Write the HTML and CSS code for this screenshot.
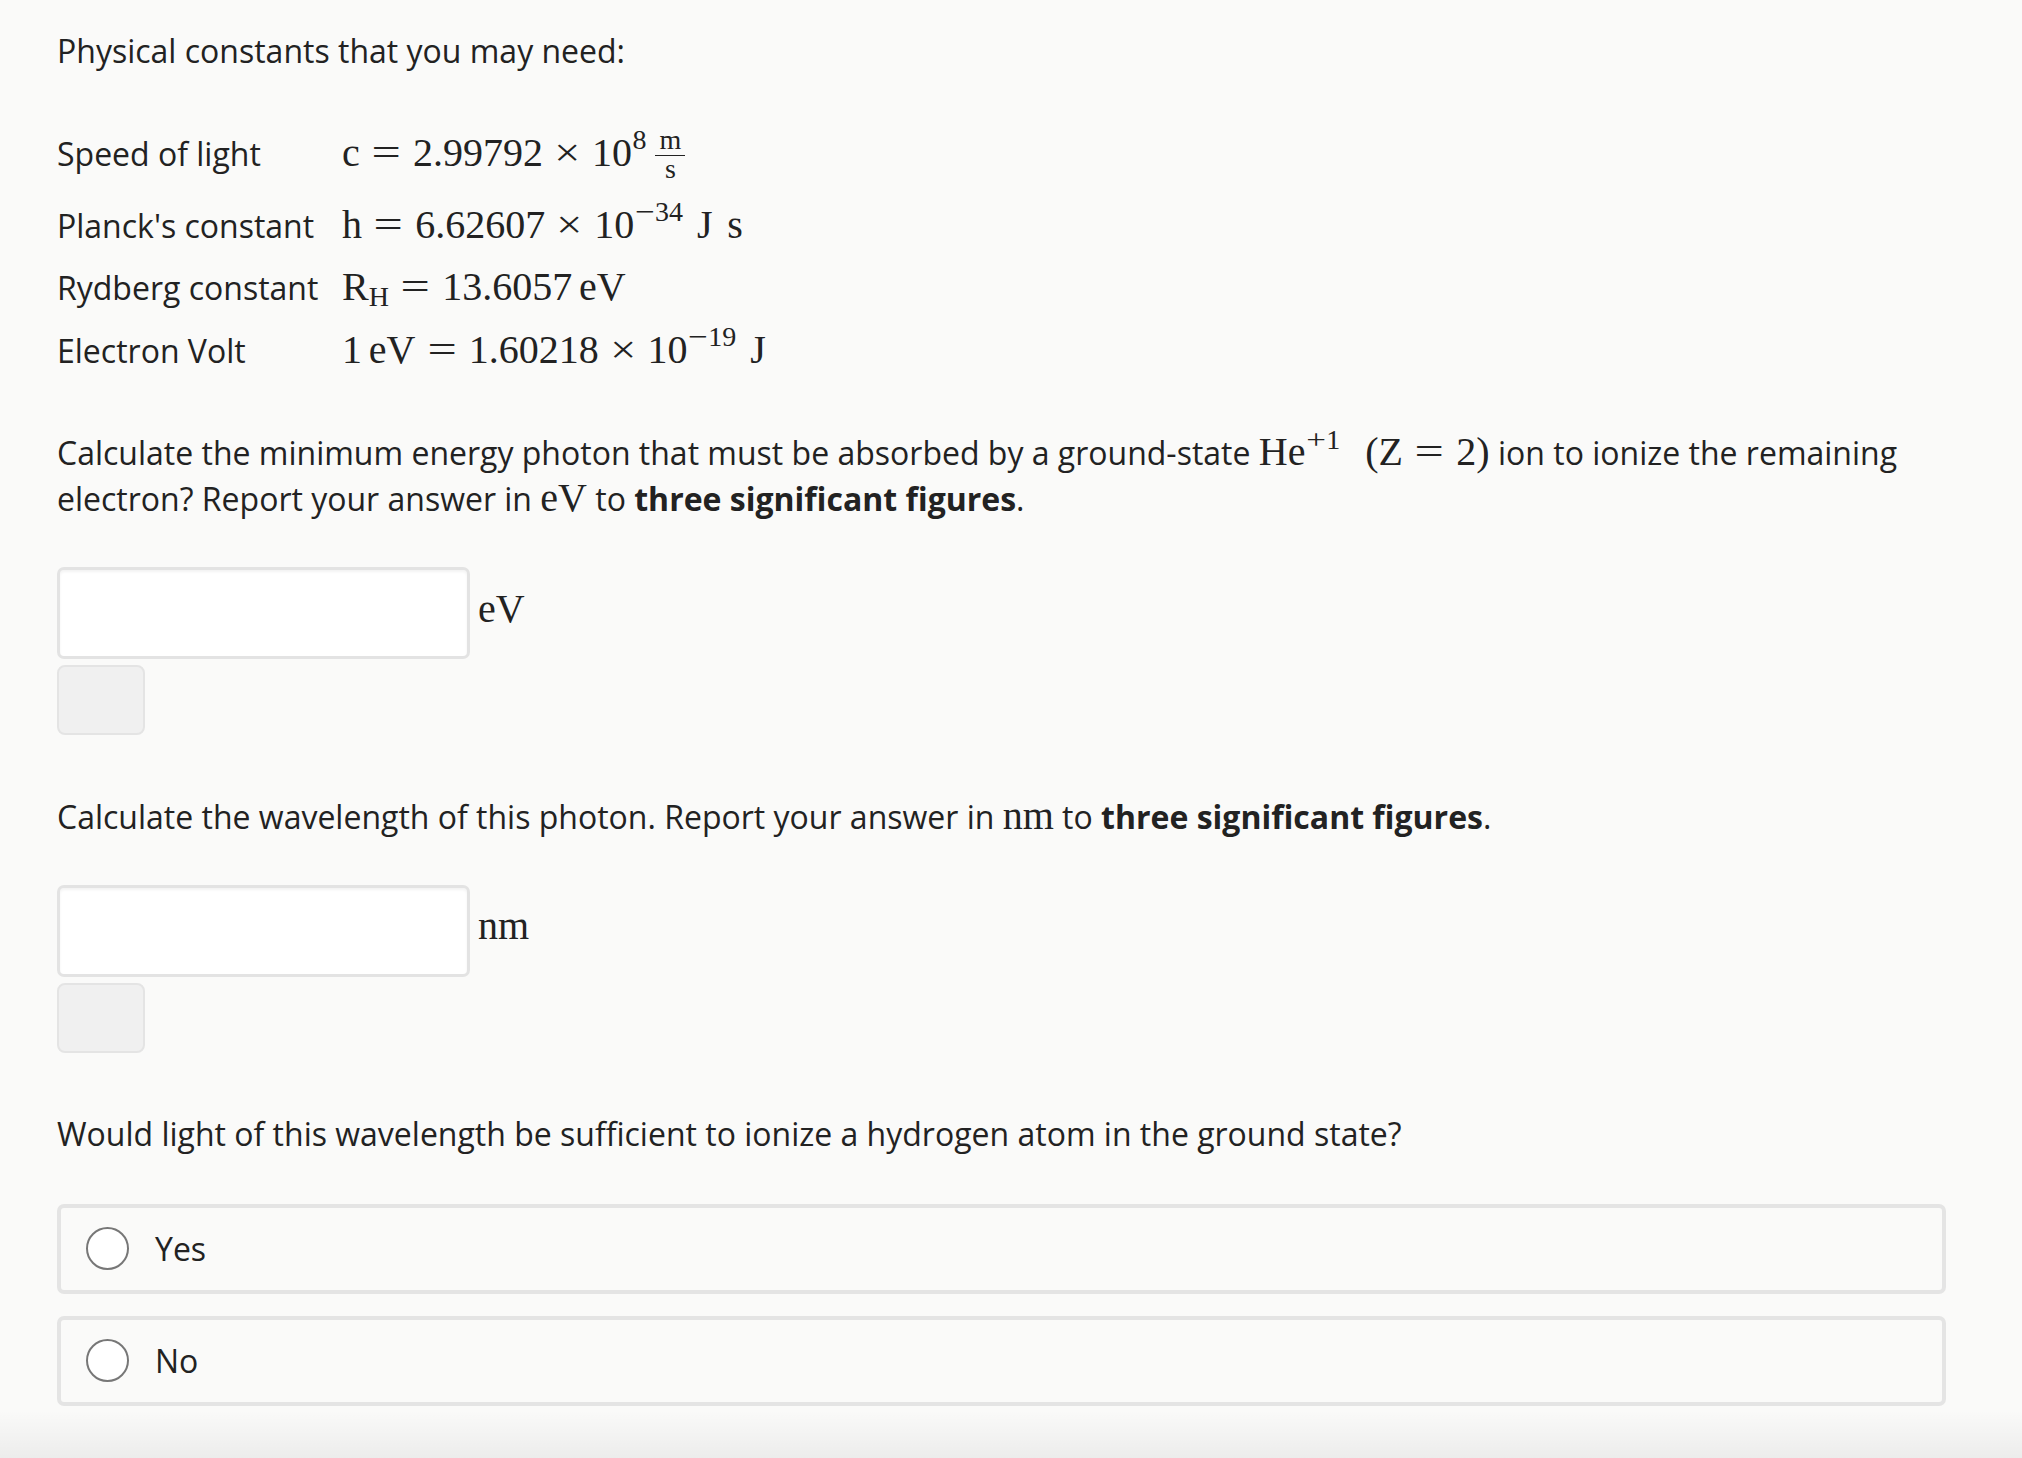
FILE: index.html
```html
<!DOCTYPE html>
<html lang="en">
<head>
<meta charset="utf-8">
<title>Quiz question</title>
<link rel="stylesheet" href="styles.css">
</head>
<body>
<main class="content">
  <p class="intro">Physical constants that you may need:</p>
  <table class="constants">
    <tr class="row-frac">
      <td class="label">Speed of light</td>
      <td class="value"><span class="m">c<span class="rel"><span class="op">=</span></span>2.99792<span class="bin"><span class="op">×</span></span>10<span class="sup">8</span><span class="frac"><span class="num">m</span><span class="den">s</span></span></span></td>
    </tr>
    <tr>
      <td class="label">Planck's constant</td>
      <td class="value"><span class="m">h<span class="rel"><span class="op">=</span></span>6.62607<span class="bin"><span class="op">×</span></span>10<span class="sup"><span class="sign">−</span>34</span><span class="unit">J s</span></span></td>
    </tr>
    <tr>
      <td class="label">Rydberg constant</td>
      <td class="value"><span class="m">R<span class="sub">H</span><span class="rel"><span class="op">=</span></span>13.6057<span class="thin">eV</span></span></td>
    </tr>
    <tr>
      <td class="label">Electron Volt</td>
      <td class="value"><span class="m">1<span class="thin">eV</span><span class="rel"><span class="op">=</span></span>1.60218<span class="bin"><span class="op">×</span></span>10<span class="sup"><span class="sign">−</span>19</span><span class="unit">J</span></span></td>
    </tr>
  </table>

  <p class="question">Calculate the minimum energy photon that must be absorbed by a ground-state <span class="m">He<span class="sup"><span class="sign">+</span>1</span></span> <span class="m paren">(Z<span class="rel"><span class="op">=</span></span>2)</span> ion to ionize the remaining electron? Report your answer in <span class="m">eV</span> to <strong>three significant figures</strong>.</p>

  <div class="answer">
    <div class="answer-row">
      <input class="answer-input" type="text" aria-label="Answer in eV">
      <span class="m unit-label">eV</span>
    </div>
    <button class="check" type="button" aria-label="Check answer"></button>
  </div>

  <p class="question">Calculate the wavelength of this photon. Report your answer in <span class="m">nm</span> to <strong>three significant figures</strong>.</p>

  <div class="answer">
    <div class="answer-row">
      <input class="answer-input" type="text" aria-label="Answer in nm">
      <span class="m unit-label">nm</span>
    </div>
    <button class="check" type="button" aria-label="Check answer"></button>
  </div>

  <p class="question">Would light of this wavelength be sufficient to ionize a hydrogen atom in the ground state?</p>

  <div class="options">
    <label class="option"><input class="radio" type="radio" name="ionize"><span class="option-text">Yes</span></label>
    <label class="option"><input class="radio" type="radio" name="ionize"><span class="option-text">No</span></label>
  </div>
</main>
<div class="shade"></div>
</body>
</html>
```

FILE: styles.css
```css
html {
  background: #fafaf9;
}

body {
  margin: 0;
  min-height: 100vh;
  display: flex;
  flex-direction: column;
  background: #fafaf9;
  color: #222222;
  font-family: "Open Sans", "Noto Sans", sans-serif;
  font-size: 32px;
  line-height: 1.4286;
}

.content {
  flex: 1;
  padding: 28px 76px 0 57px;
}

.intro {
  margin: 0 0 44px;
}

/* constants table */
.constants {
  border-collapse: collapse;
  margin-bottom: 48px;
}

.constants td {
  padding: 8.5px 0;
  vertical-align: baseline;
  white-space: nowrap;
}

.constants .row-frac td {
  padding-bottom: 12.5px;
}

.label {
  width: 285px;
}

/* math */
.m {
  font-family: "Liberation Serif", "DejaVu Serif", serif;
  font-size: 1.25em;
  line-height: 1;
  white-space: nowrap;
}

.rel {
  display: inline-block;
  width: 0.778em;
  margin: 0 0.278em;
  text-align: center;
}

.bin {
  display: inline-block;
  width: 0.778em;
  margin: 0 0.222em;
  text-align: center;
}

.op {
  display: inline-block;
  transform: scaleX(1.3);
}

.bin .op {
  transform: scaleX(1.15);
}

.sup {
  font-size: 0.7em;
  line-height: 0;
  vertical-align: 0.6em;
  margin-left: 0.02em;
}

.sign {
  display: inline-block;
  width: 0.72em;
  text-align: center;
  transform: scaleX(1.25);
}

.sub {
  font-size: 0.7em;
  line-height: 0;
  vertical-align: -0.2em;
}

.thin {
  margin-left: 0.167em;
}

.unit {
  margin-left: 0.35em;
  word-spacing: 0.12em;
}

.frac {
  display: inline-flex;
  flex-direction: column;
  vertical-align: 16.7px;
  margin-left: 0.22em;
}

.num {
  font-size: 0.7em;
  line-height: 28.5px;
  padding: 0 0.15em;
  border-bottom: 1.5px solid currentColor;
  text-align: center;
}

.den {
  font-size: 0.7em;
  line-height: 26px;
  text-align: center;
}

.paren {
  margin-left: 0.42em;
}

/* questions */
.question {
  margin: 0;
}

.question strong {
  font-weight: 700;
}

.answer {
  margin: 45.5px 0 58.5px;
}

.answer-row {
  display: flex;
  align-items: flex-start;
}

.answer-input {
  box-sizing: border-box;
  width: 413px;
  height: 92px;
  margin: 0;
  border: 3px solid #e3e3e3;
  border-radius: 7px;
  background: #ffffff;
  box-shadow: inset 0 2px 3px rgba(0, 0, 0, 0.05);
  font: inherit;
  padding: 0 16px;
  outline: none;
}

.unit-label {
  margin: 21.5px 0 0 8px;
}

.check {
  display: block;
  box-sizing: border-box;
  width: 88px;
  height: 70px;
  margin: 6px 0 0;
  padding: 0;
  border: 2px solid #e4e4e4;
  border-radius: 8px;
  background: #f0f0f0;
}

/* options */
.options {
  margin-top: 46.5px;
  display: flex;
  flex-direction: column;
  gap: 22px;
}

.option {
  box-sizing: border-box;
  height: 90px;
  display: flex;
  align-items: center;
  padding-left: 25px;
  border: 4px solid #e4e4e4;
  border-radius: 7px;
  background: #fafaf9;
}

.radio {
  appearance: none;
  -webkit-appearance: none;
  box-sizing: border-box;
  width: 43px;
  height: 43px;
  margin: 0;
  border: 2px solid #777777;
  border-radius: 50%;
  background: #ffffff;
  flex: none;
}

.option-text {
  margin-left: 26px;
}

.shade {
  height: 48px;
  background: linear-gradient(to bottom, rgba(0, 0, 0, 0), rgba(0, 0, 0, 0.055));
}
```
